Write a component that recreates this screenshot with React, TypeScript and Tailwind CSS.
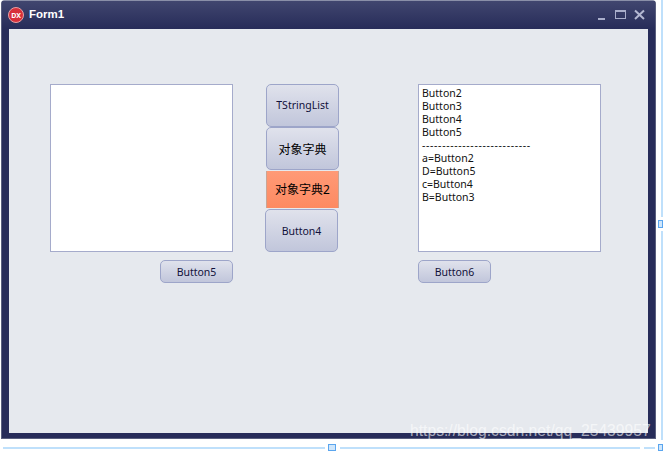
import React from "react";

const ui = "font-['Noto_Sans','Noto_Sans_CJK_SC',sans-serif]";

function Btn({ children, className = "" }: { children: React.ReactNode; className?: string }) {
  return (
    <button
      className={`flex w-[73px] items-center justify-center rounded-[5px] border border-[#9da5c9] bg-gradient-to-b from-[#e0e2ec] to-[#c1c6db] text-[10.5px] text-[#10103a] ${className}`}
    >
      {children}
    </button>
  );
}

function Memo({ lines }: { lines?: string[] }) {
  return (
    <div className="h-[168px] w-[183px] border border-[#a5abcb] bg-white pl-[3px] pt-[2px] text-[10.5px] leading-[13px] text-[#111]">
      {lines?.map((l) => (
        <div key={l} className={`whitespace-nowrap ${l.startsWith("-") ? "tracking-[0.65px]" : ""}`}>{l}</div>
      ))}
    </div>
  );
}

export default function App() {
  return (
    <div className={`relative h-[451px] w-[663px] overflow-hidden bg-white ${ui}`}>
      <div className="ml-px flex h-[439px] w-[655px] flex-col rounded-t-[4px] border border-[#5a5f7e] border-t-[#8a8fa8] bg-[#272c59]">
        <div className="flex h-[28px] items-center bg-gradient-to-b from-[#41466f] to-[#272c59] pl-[6px] pr-[10px]">
          <div className="flex h-[16px] w-[16px] items-center justify-center rounded-full border border-[#e8a0a4] bg-[#d8303a] text-[7px] font-bold leading-none text-white">
            DX
          </div>
          <span className="ml-[5px] font-['Liberation_Sans',sans-serif] text-[11.5px] font-bold text-white">Form1</span>
          <div className="ml-auto flex items-center gap-[8px]">
            <svg width="10" height="12" viewBox="0 0 10 12"><rect x="1" y="9" width="7" height="2" fill="#a9aecb" /></svg>
            <svg width="11" height="12" viewBox="0 0 11 12" fill="none"><rect x="0.5" y="1.5" width="10" height="8" stroke="#a9aecb" /><rect x="1" y="2" width="9" height="1" fill="#a9aecb" /></svg>
            <svg width="11" height="12" viewBox="0 0 11 12" fill="none"><path d="M1 1.5 L10 10 M10 1.5 L1 10" stroke="#b4b8d2" strokeWidth="2" /></svg>
          </div>
        </div>
        <div className="mx-[7px] flex flex-1 items-start bg-[#e6e9ee] pl-[41px] pt-[55px]">
          <div className="flex flex-col items-end">
            <Memo />
            <Btn className="mt-[8px] h-[23px] pt-[2px]">Button5</Btn>
          </div>
          <div className="ml-[33px] flex w-[74px] flex-col">
            <Btn className="h-[43px]">TStringList</Btn>
            <Btn className="h-[43px] pt-[2px] text-[12px] text-black">对象字典</Btn>
            <div className="my-px flex h-[37px] w-[73px] items-center justify-center border-x border-[#c9a594] bg-gradient-to-b from-[#ff9a76] to-[#fd8a62] pt-px text-[12px] text-black">
              对象字典2
            </div>
            <Btn className="-ml-px h-[43px] pt-[2px]">Button4</Btn>
          </div>
          <div className="ml-[78px] flex flex-col items-start">
            <Memo
              lines={[
                "Button2",
                "Button3",
                "Button4",
                "Button5",
                "---------------------------",
                "a=Button2",
                "D=Button5",
                "c=Button4",
                "B=Button3",
              ]}
            />
            <Btn className="mt-[8px] h-[23px] pt-[2px]">Button6</Btn>
          </div>
        </div>
        <div className="h-[5px]" />
      </div>
      <div className="absolute left-[3px] top-[447px] h-[2px] w-[322px] bg-[#bfe0fb]" />
      <div className="absolute left-[340px] top-[447px] h-[2px] w-[300px] bg-[#bfe0fb]" />
      <div className="absolute left-[644px] top-[447px] h-[2px] w-[11px] bg-[#bfe0fb]" />
      <div className="absolute left-[328px] top-[444px] h-[7px] w-[8px] border border-[#5aa5ee] bg-[#cfe6fb]" />
      <div className="absolute left-[658px] top-[444px] h-[7px] w-[5px] border border-[#5aa5ee] bg-[#cfe6fb]" />
      <div className="absolute left-[658px] top-[220px] h-[8px] w-[5px] border border-[#5aa5ee] bg-[#cfe6fb]" />
      <div className="absolute right-0 top-0 h-[217px] w-[2px] bg-[#bfe0fb]" />
      <div className="absolute right-0 top-[231px] h-[209px] w-[2px] bg-[#bfe0fb]" />
      <div className="absolute left-[410px] top-[421px] font-['Liberation_Sans',sans-serif] text-[15.7px] leading-[20px] text-white/60">
        https://blog.csdn.net/qq_25439957
      </div>
    </div>
  );
}
